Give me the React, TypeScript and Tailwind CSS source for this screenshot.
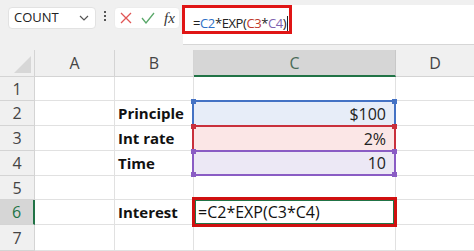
import React from "react";

const font = { fontFamily: '"Open Sans", "Liberation Sans", sans-serif' };

const rows = [
  { n: "1", label: "", value: "", h: "h-[24px]" },
  { n: "2", label: "Principle", value: "$100", h: "h-[25px]" },
  { n: "3", label: "Int rate", value: "2%", h: "h-[25px]" },
  { n: "4", label: "Time", value: "10", h: "h-[25px]" },
  { n: "5", label: "", value: "", h: "h-[24px]" },
  { n: "6", label: "Interest", value: "", h: "h-[25px]" },
  { n: "7", label: "", value: "", h: "h-[26px]" },
];

const Handle = ({ className }: { className: string }) => (
  <div className={"absolute w-[5px] h-[5px] z-10 " + className} />
);

const Formula = () => (
  <>
    =<span className="text-[#2f6fc6]">C2</span>*EXP(<span className="text-[#c0392b]">C3</span>*
    <span className="text-[#8063b0]">C4</span>)
  </>
);

export default function App() {
  return (
    <div className="w-[474px] h-[251px] overflow-hidden bg-white text-[#222]" style={font}>
      {/* formula bar */}
      <div className="relative h-[50px] bg-[#f0f0f0] flex">
        <div className="ml-[8px] mt-[7px] w-[88px] h-[22px] bg-white rounded border border-[#e2e2e2] flex items-center justify-between pl-[5px] pr-[6px]">
          <span className="text-[13px] text-[#222]">COUNT</span>
          <svg width="10" height="6" viewBox="0 0 10 6">
            <path d="M1 1l4 4 4-4" stroke="#555" strokeWidth="1.2" fill="none" />
          </svg>
        </div>
        <div className="ml-[7px] mt-[11px] flex flex-col gap-[2px] items-center w-[4px]">
          <div className="w-[2px] h-[2px] bg-[#555]" />
          <div className="w-[2px] h-[2px] bg-[#555]" />
          <div className="w-[2px] h-[2px] bg-[#555]" />
        </div>
        <div className="ml-[7px] mt-[7px] w-[66px] h-[22px] bg-white rounded border border-[#ececec] flex items-center pl-[5px] gap-[9px]">
          <svg width="12" height="12" viewBox="0 0 12 12">
            <path d="M1 1l10 10M11 1L1 11" stroke="#e05555" strokeWidth="1.3" fill="none" />
          </svg>
          <svg width="14" height="12" viewBox="0 0 14 12">
            <path d="M1 6l4 5 8-10" stroke="#5aa86a" strokeWidth="1.3" fill="none" />
          </svg>
          <span className="text-[15px] italic text-[#333]" style={{ fontFamily: '"Liberation Serif", serif' }}>
            fx
          </span>
        </div>
        <div className="ml-[3px] mt-[5px] flex-1 h-[40px] bg-white border-b border-[#d6d6d6] pl-[10px] pt-[5px]">
          <span className="text-[13px] tracking-[-0.4px] text-[#222]">
            <Formula />
          </span>
          <span className="inline-block w-[1px] h-[16px] bg-[#222] align-middle ml-[1px]" />
        </div>
        <div className="absolute left-[182px] top-[5px] w-[110px] h-[29px] border-[3px] border-[#e01515]" />
      </div>

      {/* grid */}
      <div className="flex h-[27px] bg-[#f0f0f0]">
        <div className="w-[35px] relative border-r border-b border-[#d4d4d4]">
          <div className="absolute right-[3px] bottom-[3px] w-0 h-0 border-l-[17px] border-l-transparent border-b-[17px] border-b-[#d7d7d7]" />
        </div>
        <div className="w-[80px] border-r border-b border-[#d4d4d4] flex items-center justify-center text-[16px] text-[#444]">A</div>
        <div className="w-[79px] border-r border-b border-[#d4d4d4] flex items-center justify-center text-[16px] text-[#444]">B</div>
        <div className="w-[202px] bg-[#d6d6d6] border-r border-[#c8c8c8] border-b-2 border-b-[#217346] flex items-center justify-center text-[16px] text-[#4a6b58]">C</div>
        <div className="w-[78px] border-b border-[#d4d4d4] flex items-center justify-center text-[16px] text-[#444]">D</div>
      </div>

      {rows.map((r) => {
        const active = r.n === "6";
        return (
          <div key={r.n} className={"flex " + r.h}>
            <div
              className={
                "w-[35px] flex items-center justify-center text-[16px] border-b border-[#d4d4d4] " +
                (active
                  ? "bg-[#d6d6d6] text-[#217346] border-r-2 border-r-[#217346]"
                  : "bg-[#f0f0f0] text-[#444] border-r border-r-[#d4d4d4]")
              }
            >
              {r.n}
            </div>
            <div className="w-[80px] border-r border-b border-[#e1e1e1]" />
            <div className="w-[79px] border-r border-b border-[#e1e1e1] flex items-center pl-[3px] text-[15px] font-bold text-[#111]">
              {r.label}
            </div>
            <div className="w-[202px] relative border-r border-b border-[#e1e1e1]">
              {r.n === "2" && (
                <div className="absolute left-[-2px] top-[-1px] right-[-1px] bottom-[-1px] bg-[#e7edf8] border-[2px] border-b-0 border-[#4472c4] flex items-center justify-end pr-[8px] text-[16px]">
                  {r.value}
                  <Handle className="bg-[#4472c4] left-[-3px] top-[-3px]" />
                  <Handle className="bg-[#4472c4] right-[-3px] top-[-3px]" />
                </div>
              )}
              {r.n === "3" && (
                <div className="absolute left-[-2px] top-[-1px] right-[-1px] bottom-[-1px] bg-[#fbe6e6] border-[2px] border-b-0 border-[#c9303c] flex items-center justify-end pr-[8px] text-[16px]">
                  {r.value}
                  <Handle className="bg-[#c9303c] left-[-3px] top-[-3px]" />
                  <Handle className="bg-[#c9303c] right-[-3px] top-[-3px]" />
                </div>
              )}
              {r.n === "4" && (
                <div className="absolute left-[-2px] top-[-1px] right-[-1px] bottom-[-1px] bg-[#ece8f5] border-[2px] border-[#8a5cc4] flex items-center justify-end pr-[8px] text-[16px]">
                  {r.value}
                  <Handle className="bg-[#8a5cc4] left-[-3px] top-[-3px]" />
                  <Handle className="bg-[#8a5cc4] right-[-3px] top-[-3px]" />
                  <Handle className="bg-[#8a5cc4] left-[-3px] bottom-[-3px]" />
                  <Handle className="bg-[#8a5cc4] right-[-3px] bottom-[-3px]" />
                </div>
              )}
              {active && (
                <div className="absolute left-[-2px] top-[-3px] right-[-2px] bottom-[-3px] border-[3px] border-[#d01010] z-10">
                  <div className="w-full h-full border border-[#217346] flex items-center pl-[2px] text-[16px] text-[#111]">
                    =C2*EXP(C3*C4)
                  </div>
                </div>
              )}
            </div>
            <div className="w-[78px] border-b border-[#e1e1e1]" />
          </div>
        );
      })}
    </div>
  );
}
